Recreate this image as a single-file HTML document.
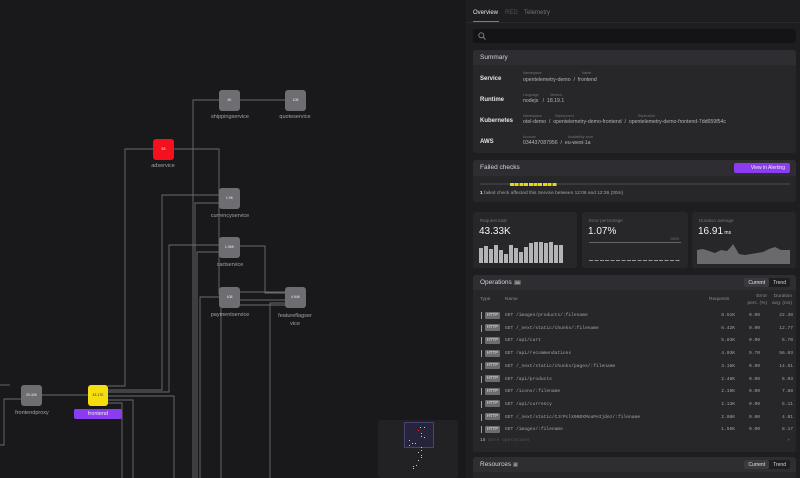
<!DOCTYPE html>
<html><head><meta charset="utf-8"><style>
*{margin:0;padding:0;box-sizing:border-box}
html,body{width:800px;height:478px;overflow:hidden}
body{background:#19191c;font-family:"Liberation Sans",sans-serif;color:#d4d4d8;position:relative}
.map{position:absolute;left:0;top:0;width:466px;height:478px;background:#19191c}
.panel{position:absolute;left:466px;top:0;width:334px;height:478px;background:#1e1e21;overflow:hidden}
.abs{position:absolute}
.card{position:absolute;left:7px;width:323px;background:#27272a;border-radius:3px}
.hdr{background:#2e2e32;height:15px;font-size:6.5px;color:#d4d4d8;padding:4px 7px;border-radius:3px 3px 0 0}
.lbl{font-size:6px;color:#e4e4e7;position:absolute;font-weight:bold}
.sm{font-size:3.5px;color:#71717a;position:absolute}
.val{font-size:5.2px;color:#b4b4ba;position:absolute}
.mono{font-family:"Liberation Mono",monospace}
.row{position:absolute;left:8px;width:312px;height:10px;font-size:4.6px;color:#a1a1aa}
.row .b{position:absolute;left:0;top:2px;width:1px;height:7px;background:#a1a1aa}
.row .h{position:absolute;left:4px;top:1.5px;background:#6b6b70;color:#e4e4e7;font-size:4.6px;padding:1px 2px;border-radius:1px}
.row .n{position:absolute;left:24px;top:3px}
.row .r{position:absolute;top:3px;text-align:right}
.tog{position:absolute;right:6px;top:3px;height:9px;background:#1e1e21;border-radius:2px;font-size:5px;display:flex}
.tog span{padding:1.5px 4px}
.tog .on{background:#3a3a3e;color:#e4e4e7;border-radius:2px}
</style></head><body>
<div class="map">
<svg width="466" height="478" style="position:absolute;left:0;top:0" fill="none" stroke="#6b6b70" stroke-width="0.9">
<path d="M219 100H193V478"/><path d="M240 100H285"/>
<path d="M153 149H125V386H108"/><path d="M174 149H219V295"/>
<path d="M219 195H162V390H108"/><path d="M219 203H195V478"/>
<path d="M219 245H169V392H108"/><path d="M219 252H197V478"/>
<path d="M240 246H265V293H285"/>
<path d="M219 297H200V478"/><path d="M240 292H285M240 300H285M240 305H285"/>
<path d="M285 303H270V478"/><path d="M221 308V478"/>
<path d="M108 396H174V478"/><path d="M108 400H133V478"/><path d="M108 403H122V478"/>
<path d="M42 395H88"/><path d="M21 399H4V445H0"/>
<path d="M0 385H10"/>
</svg>
<div class="abs" style="left:219px;top:90px;width:21px;height:21px;background:#6e6e72;border-radius:3px;font-size:3.5px;color:#eee;text-align:center;line-height:21px">4K</div>
<div class="abs" style="left:285px;top:90px;width:21px;height:21px;background:#6e6e72;border-radius:3px;font-size:3.5px;color:#eee;text-align:center;line-height:21px">108</div>
<div class="abs" style="left:153px;top:139px;width:21px;height:21px;background:#f5101e;border-radius:3px;font-size:3.5px;color:#fff;text-align:center;line-height:21px">53</div>
<div class="abs" style="left:219px;top:188px;width:21px;height:21px;background:#6e6e72;border-radius:3px;font-size:3.5px;color:#eee;text-align:center;line-height:21px">1.9K</div>
<div class="abs" style="left:219px;top:237px;width:21px;height:21px;background:#6e6e72;border-radius:3px;font-size:3.5px;color:#eee;text-align:center;line-height:21px">1.96K</div>
<div class="abs" style="left:219px;top:287px;width:21px;height:21px;background:#6e6e72;border-radius:3px;font-size:3.5px;color:#eee;text-align:center;line-height:21px">108</div>
<div class="abs" style="left:285px;top:287px;width:21px;height:21px;background:#6e6e72;border-radius:3px;font-size:3.5px;color:#eee;text-align:center;line-height:21px">4.94K</div>
<div class="abs" style="left:21px;top:385px;width:21px;height:21px;background:#6e6e72;border-radius:3px;font-size:3.5px;color:#eee;text-align:center;line-height:21px">20.40K</div>
<div class="abs" style="left:88px;top:385px;width:20px;height:21px;background:#f5dd10;border-radius:3px;font-size:3.5px;color:#333;text-align:center;line-height:21px">43.17K</div>
<div class="abs" style="left:74px;top:409px;width:48px;height:10px;background:#8b3cf0;border-radius:2px;font-size:5.5px;color:#eee;text-align:center;line-height:10px">frontend</div>
<div class="abs" style="left:200px;top:114px;width:60px;text-align:center;font-size:5.5px;color:#a1a1aa">shippingservice</div>
<div class="abs" style="left:265px;top:114px;width:60px;text-align:center;font-size:5.5px;color:#a1a1aa">quoteservice</div>
<div class="abs" style="left:133px;top:163px;width:60px;text-align:center;font-size:5.5px;color:#a1a1aa">adservice</div>
<div class="abs" style="left:200px;top:213px;width:60px;text-align:center;font-size:5.5px;color:#a1a1aa">currencyservice</div>
<div class="abs" style="left:200px;top:262px;width:60px;text-align:center;font-size:5.5px;color:#a1a1aa">cartservice</div>
<div class="abs" style="left:200px;top:312px;width:60px;text-align:center;font-size:5.5px;color:#a1a1aa">paymentservice</div>
<div class="abs" style="left:265px;top:312px;width:60px;text-align:center;font-size:5.5px;color:#a1a1aa;line-height:8px">featureflagser<br>vice</div>
<div class="abs" style="left:2px;top:410px;width:60px;text-align:center;font-size:5.5px;color:#a1a1aa">frontendproxy</div>
<div class="abs" style="left:378px;top:420px;width:80px;height:58px;background:#222225;border-radius:3px">
<div class="abs" style="left:26px;top:2px;width:30px;height:26px;border:1px solid #4a4270;background:#26243a"></div>
<div class="abs" style="left:40px;top:10px;width:1px;height:1px;background:#f22"></div>
<svg class="abs" style="left:0;top:0" width="80" height="58" fill="#ccc"><rect x="42" y="7" width="1" height="1"/><rect x="46" y="7" width="1" height="1"/><rect x="43" y="13" width="1" height="1"/><rect x="43" y="16" width="1" height="1"/><rect x="46" y="17" width="1" height="1"/><rect x="31" y="20" width="1" height="1"/><rect x="34" y="23" width="1" height="1"/><rect x="37" y="23" width="1" height="1"/><rect x="31" y="25" width="1" height="1"/><rect x="43" y="27" width="1" height="1"/><rect x="43" y="30" width="1" height="1"/><rect x="40" y="32" width="1" height="1"/><rect x="43" y="35" width="1" height="1"/><rect x="43" y="37" width="1" height="1"/><rect x="40" y="40" width="1" height="1"/><rect x="38" y="45" width="1" height="1"/><rect x="35" y="46" width="1" height="1"/><rect x="35" y="48" width="1" height="1"/></svg>
</div>
</div>

<div class="panel">
<div class="abs" style="left:7px;top:10px;font-size:6px;color:#e4e4e7">Overview</div>
<div class="abs" style="left:39px;top:10px;font-size:6px;color:#52525b">RED</div>
<div class="abs" style="left:58px;top:10px;font-size:6px;color:#71717a">Telemetry</div>
<div class="abs" style="left:7px;top:21px;width:26px;height:1px;background:#8b5cf6"></div>
<div class="abs" style="left:0;top:22px;width:334px;height:1px;background:#2a2a2e"></div>
<div class="abs" style="left:7px;top:29px;width:323px;height:14px;background:#141416;border-radius:3px">
<svg class="abs" style="left:5px;top:3px" width="8" height="8" fill="none" stroke="#888" stroke-width="0.9"><circle cx="3.3" cy="3.3" r="2.5"/><path d="M5.2 5.2L7.5 7.5"/></svg></div>

<div class="card" style="top:50px;height:103px"><div class="hdr">Summary</div>
<div class="lbl" style="left:7px;top:26px">Service</div>
<div class="sm" style="left:50px;top:21px">Namespace</div><div class="sm" style="left:109px;top:21px">Name</div>
<div class="val" style="left:50px;top:27px">opentelemetry-demo&nbsp; / &nbsp;frontend</div>
<div class="lbl" style="left:7px;top:47px">Runtime</div>
<div class="sm" style="left:50px;top:43px">Language</div><div class="sm" style="left:77px;top:43px">Version</div>
<div class="val" style="left:50px;top:48px">nodejs&nbsp;&nbsp; / &nbsp;18.19.1</div>
<div class="lbl" style="left:7px;top:68px">Kubernetes</div>
<div class="sm" style="left:50px;top:64px">Namespace</div><div class="sm" style="left:82px;top:64px">Deployment</div><div class="sm" style="left:165px;top:64px">ReplicaSet</div>
<div class="val" style="left:50px;top:69px">otel-demo &nbsp;/ &nbsp;opentelemetry-demo-frontend &nbsp;/ &nbsp;opentelemetry-demo-frontend-7dd659f54c</div>
<div class="lbl" style="left:7px;top:89px">AWS</div>
<div class="sm" style="left:50px;top:85px">Account</div><div class="sm" style="left:95px;top:85px">Availability zone</div>
<div class="val" style="left:50px;top:90px">034437087956 &nbsp;/ &nbsp;eu-west-1a</div>
</div>

<div class="card" style="top:160px;height:42px"><div class="hdr" style="height:16px">Failed checks</div>
<div class="abs" style="right:6px;top:3px;width:56px;height:10px;background:#8b3cf0;border-radius:2px;font-size:5px;color:#eee;line-height:10px;text-align:right;padding-right:5px">View in Alerting</div>
<div class="abs" style="left:7px;top:23px;width:310px;height:2px;background:#3a3a3e"></div>
<div class="abs" style="left:37px;top:23px;width:47px;height:3px;background:repeating-linear-gradient(90deg,#e6d810 0 4px,#333 4px 4.7px)"></div>
<div class="abs" style="left:7px;top:31px;font-size:4.8px;color:#a1a1aa"><b style="color:#eee">1</b> failed check affected this Service between 12:06 and 12:36 (30m)</div>
</div>

<div class="card" style="top:212px;width:104px;height:56px">
<div class="sm" style="left:7px;top:6px;font-size:4.5px">Request total</div>
<div class="abs" style="left:6px;top:14px;font-size:10px;color:#f4f4f5">43.33K</div>
<svg class="abs" style="left:6px;top:30px" width="96" height="21" fill="#b4b4b8"><rect x="0" y="6" width="4" height="15"/><rect x="5" y="4" width="4" height="17"/><rect x="10" y="7" width="4" height="14"/><rect x="15" y="3" width="4" height="18"/><rect x="20" y="8" width="4" height="13"/><rect x="25" y="12" width="4" height="9"/><rect x="30" y="3" width="4" height="18"/><rect x="35" y="6" width="4" height="15"/><rect x="40" y="10" width="4" height="11"/><rect x="45" y="5" width="4" height="16"/><rect x="50" y="1" width="4" height="20"/><rect x="55" y="0" width="4" height="21"/><rect x="60" y="0" width="4" height="21"/><rect x="65" y="1" width="4" height="20"/><rect x="70" y="0" width="4" height="21"/><rect x="75" y="3" width="4" height="18"/><rect x="80" y="3" width="4" height="18"/></svg>
</div>
<div class="card" style="top:212px;left:116px;width:106px;height:56px">
<div class="sm" style="left:7px;top:6px;font-size:4.5px">Error percentage</div>
<div class="abs" style="left:6px;top:14px;font-size:10px;color:#f4f4f5">1.07%</div>
<div class="abs" style="left:7px;top:30px;width:92px;height:1px;background:#666"></div>
<div class="sm" style="left:88px;top:25px">100%</div>
<div class="abs" style="left:7px;top:48px;width:92px;height:1px;background:repeating-linear-gradient(90deg,#999 0 4px,transparent 4px 5.4px)"></div>
</div>
<div class="card" style="top:212px;left:226px;width:104px;height:56px">
<div class="sm" style="left:7px;top:6px;font-size:4.5px">Duration average</div>
<div class="abs" style="left:6px;top:14px;font-size:10px;color:#f4f4f5">16.91<span style="font-size:5px"> ms</span></div>
<svg class="abs" style="left:5px;top:28px" width="93" height="24"><path d="M0 10L6 9L12 11L18 13L24 10L30 11L33 8L36 4L42 14L48 15L54 14L60 13L66 12L72 9L78 7L84 10L88 10L93 10V24H0Z" fill="#6a6a6e"/></svg>
</div>

<div class="card" style="top:275px;height:177px"><div class="hdr">Operations <span style="background:#5a5a5e;color:#eee;font-size:4px;padding:0 1.5px;border-radius:1px">28</span></div>
<div class="tog"><span class="on">Current</span><span>Trend</span></div>
<div class="abs" style="left:7px;top:22px;font-size:4.8px;color:#8a8a90">Type</div>
<div class="abs" style="left:32px;top:22px;font-size:4.8px;color:#8a8a90">Name</div>
<div class="abs" style="left:236px;top:22px;font-size:4.8px;color:#8a8a90">Requests</div>
<div class="abs" style="left:270px;top:18px;width:24px;text-align:right;font-size:4.8px;color:#8a8a90;line-height:7px">Error<br>perc. (%)</div>
<div class="abs" style="left:295px;top:18px;width:24px;text-align:right;font-size:4.8px;color:#8a8a90;line-height:7px">Duration<br>avg. (ms)</div>
<div class="mono" style="position:absolute;left:0;top:35px;width:323px">
<div class="row" style="top:0"><i class="b"></i><span class="h">HTTP</span><span class="n">GET /images/products/:filename</span><span class="r" style="right:58px">8.51K</span><span class="r" style="right:33px">0.00</span><span class="r" style="right:0">22.38</span></div>
<div class="row" style="top:12.7px"><i class="b"></i><span class="h">HTTP</span><span class="n">GET /_next/static/chunks/:filename</span><span class="r" style="right:58px">6.42K</span><span class="r" style="right:33px">0.00</span><span class="r" style="right:0">12.77</span></div>
<div class="row" style="top:25.4px"><i class="b"></i><span class="h">HTTP</span><span class="n">GET /api/cart</span><span class="r" style="right:58px">5.83K</span><span class="r" style="right:33px">0.00</span><span class="r" style="right:0">6.70</span></div>
<div class="row" style="top:38.1px"><i class="b"></i><span class="h">HTTP</span><span class="n">GET /api/recommendations</span><span class="r" style="right:58px">4.03K</span><span class="r" style="right:33px">9.70</span><span class="r" style="right:0">56.03</span></div>
<div class="row" style="top:50.8px"><i class="b"></i><span class="h">HTTP</span><span class="n">GET /_next/static/chunks/pages/:filename</span><span class="r" style="right:58px">3.16K</span><span class="r" style="right:33px">0.00</span><span class="r" style="right:0">14.51</span></div>
<div class="row" style="top:63.5px"><i class="b"></i><span class="h">HTTP</span><span class="n">GET /api/products</span><span class="r" style="right:58px">2.48K</span><span class="r" style="right:33px">0.00</span><span class="r" style="right:0">6.93</span></div>
<div class="row" style="top:76.2px"><i class="b"></i><span class="h">HTTP</span><span class="n">GET /icons/:filename</span><span class="r" style="right:58px">2.19K</span><span class="r" style="right:33px">0.00</span><span class="r" style="right:0">7.88</span></div>
<div class="row" style="top:88.9px"><i class="b"></i><span class="h">HTTP</span><span class="n">GET /api/currency</span><span class="r" style="right:58px">2.13K</span><span class="r" style="right:33px">0.00</span><span class="r" style="right:0">5.11</span></div>
<div class="row" style="top:101.6px"><i class="b"></i><span class="h">HTTP</span><span class="n">GET /_next/static/CJrPclX00BXMouPeIjdez/:filename</span><span class="r" style="right:58px">2.08K</span><span class="r" style="right:33px">0.00</span><span class="r" style="right:0">4.81</span></div>
<div class="row" style="top:114.3px"><i class="b"></i><span class="h">HTTP</span><span class="n">GET /images/:filename</span><span class="r" style="right:58px">1.55K</span><span class="r" style="right:33px">0.00</span><span class="r" style="right:0">8.17</span></div>
<div class="row" style="top:128px;left:7px;color:#55555a"><span style="color:#aaa">18</span> more operations<span style="position:absolute;right:2px;color:#aaa">›</span></div>
</div>
</div>

<div class="card" style="top:457px;height:21px;border-radius:3px 3px 0 0"><div class="hdr">Resources <span style="background:#5a5a5e;color:#eee;font-size:4px;padding:0 1.5px;border-radius:1px">8</span></div>
<div class="tog"><span class="on">Current</span><span>Trend</span></div>
</div>
</div>
</body></html>
